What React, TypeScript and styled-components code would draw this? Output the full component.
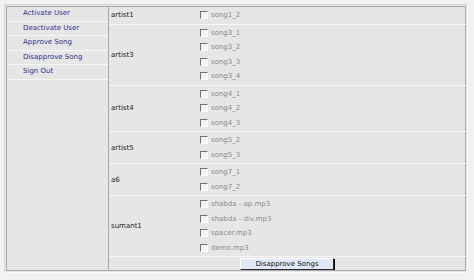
import React from "react";
import styled, { createGlobalStyle } from "styled-components";

const GlobalStyle = createGlobalStyle`
  html, body {
    margin: 0;
    padding: 0;
    background: #f2f2f2;
    font-family: "DejaVu Sans", Verdana, sans-serif;
    font-size: 7px;
  }
`;

const Frame = styled.div`
  margin: 4px 0 0 4px;
  width: 464px;
  border: 1px solid #d6d6d6;
  border-right-color: #fafafa;
  border-bottom-color: #fafafa;
  padding: 1px;
  box-sizing: border-box;
  background: #e6e6e6;
`;

const Table = styled.table`
  width: 100%;
  border-collapse: collapse;
  border: 1px solid #a9a9a9;
  background: #e6e6e6;
`;

const SideCell = styled.td`
  width: 100px;
  padding: 0 0 0 1px;
  vertical-align: top;
  border-right: 1px solid #a9a9a9;
`;

const Menu = styled.ul`
  list-style: none;
  margin: 0;
  padding: 0;
`;

const MenuItem = styled.li`
  height: 13.5px;
  line-height: 13.5px;
  padding-left: 15px;
  border-bottom: 1px solid #f7f7f7;
  color: #2e2e8c;
  white-space: nowrap;
`;

const Row = styled.tr`
  border-bottom: 1px solid #f7f7f7;
`;

const ArtistCell = styled.td`
  width: 86px;
  padding: 0 0 0 2px;
  color: #1a1a1a;
  border-left: 1px solid #f7f7f7;
  vertical-align: middle;
`;

const SongCell = styled.td`
  padding: 1px 0 1px 3px;
  vertical-align: top;
`;

const Song = styled.label`
  display: flex;
  align-items: center;
  gap: 3px;
  height: 14.5px;
  color: #8a8a8a;
  white-space: nowrap;
`;

const Box = styled.input.attrs({ type: "checkbox" })`
  appearance: none;
  margin: 0;
  width: 8px;
  height: 8px;
  box-sizing: border-box;
  border-top: 1px solid #707070;
  border-left: 1px solid #707070;
  border-right: 1px solid #ffffff;
  border-bottom: 1px solid #ffffff;
  background: #f4f4f4;
`;

const ButtonCell = styled.td`
  text-align: center;
  padding: 0;
  height: 13px;
  border-left: 1px solid #f7f7f7;
`;

const Button = styled.button`
  display: block;
  margin: 0 auto;
  font-family: "DejaVu Sans", Verdana, sans-serif;
  font-size: 7px;
  width: 94px;
  height: 12px;
  padding: 0;
  line-height: 10px;
  color: #111;
  background: #dfe9f8;
  border: 1px solid #2a2a2a;
  border-top-color: #ffffff;
  border-left-color: #ffffff;
  box-shadow: 1px 1px 0 #000;
`;

const menu = ["Activate User", "Deactivate User", "Approve Song", "Disapprove Song", "Sign Out"];

const artists: { name: string; songs: string[] }[] = [
  { name: "artist1", songs: ["song1_2"] },
  { name: "artist3", songs: ["song3_1", "song3_2", "song3_3", "song3_4"] },
  { name: "artist4", songs: ["song4_1", "song4_2", "song4_3"] },
  { name: "artist5", songs: ["song5_2", "song5_3"] },
  { name: "a6", songs: ["song7_1", "song7_2"] },
  { name: "sumant1", songs: ["shabda - ap.mp3", "shabda - div.mp3", "spacer.mp3", "demo.mp3"] },
];

export default function App() {
  return (
    <>
      <GlobalStyle />
      <Frame>
        <Table>
          <tbody>
            {artists.map((a, i) => (
              <Row key={a.name}>
                {i === 0 && (
                  <SideCell rowSpan={artists.length + 1}>
                    <Menu>
                      {menu.map((m) => (
                        <MenuItem key={m}>{m}</MenuItem>
                      ))}
                    </Menu>
                  </SideCell>
                )}
                <ArtistCell>{a.name}</ArtistCell>
                <SongCell>
                  {a.songs.map((s) => (
                    <Song key={s}>
                      <Box />
                      {s}
                    </Song>
                  ))}
                </SongCell>
              </Row>
            ))}
            <tr>
              <ButtonCell colSpan={2}>
                <Button>Disapprove Songs</Button>
              </ButtonCell>
            </tr>
          </tbody>
        </Table>
      </Frame>
    </>
  );
}
